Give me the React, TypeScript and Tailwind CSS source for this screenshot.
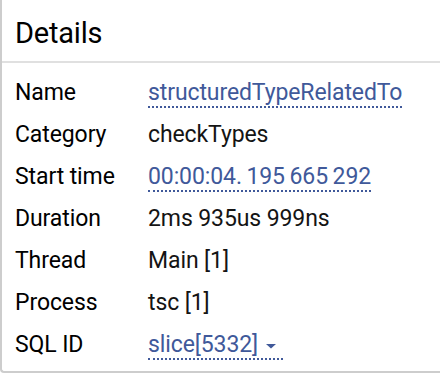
const rows: { label: string; value: string; link?: boolean; menu?: boolean }[] = [
  { label: "Name", value: "structuredTypeRelatedTo", link: true },
  { label: "Category", value: "checkTypes" },
  { label: "Start time", value: "00:00:04.\u2009195\u2009665\u2009292", link: true },
  { label: "Duration", value: "2ms 935us 999ns" },
  { label: "Thread", value: "Main [1]" },
  { label: "Process", value: "tsc [1]" },
  { label: "SQL ID", value: "slice[5332]", link: true, menu: true },
];

function Value({ row }: { row: (typeof rows)[number] }) {
  if (!row.link) return <span>{row.value}</span>;
  return (
    <span className="inline-flex items-center leading-[26px] border-b-2 border-dotted border-[#40599a] text-[#40599a]">
      {row.value}
      {row.menu && (
        <svg width="24" height="24" viewBox="0 0 24 24" className="-mb-[2px] ml-[1px]">
          <path d="M7 10l5 4.5 5-4.5z" fill="#40599a" />
        </svg>
      )}
    </span>
  );
}

export default function App() {
  return (
    <div className="w-[440px] h-[378px] bg-white font-['Roboto',sans-serif] text-[#141414]">
      <div className="h-[373px] border-l-2 border-b-2 border-[#cdcdcd] rounded-bl-[4px]">
        <div className="h-[63px] border-b-2 border-[#e0e0e0] pl-[13px] pt-[17px] text-[29px] leading-[32px] tracking-[-0.2px] text-black">
          Details
        </div>
        <div className="pl-[13px] pt-[9px] text-[23px] tracking-[-0.1px]">
          {rows.map((r) => (
            <div key={r.label} className="grid grid-cols-[133px_1fr] h-[42px] items-center leading-[42px]">
              <span className="text-black">{r.label}</span>
              <div className="leading-[42px]">
                <Value row={r} />
              </div>
            </div>
          ))}
        </div>
      </div>
    </div>
  );
}
